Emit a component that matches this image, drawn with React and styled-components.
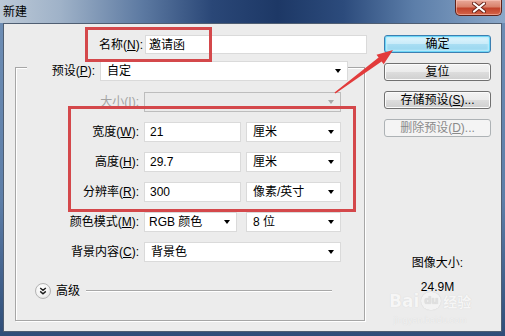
import React from "react";
import styled, { createGlobalStyle, css } from "styled-components";

const GlobalStyle = createGlobalStyle`
  html, body {
    margin: 0;
    padding: 0;
    width: 505px;
    height: 336px;
    overflow: hidden;
    background: #ececec;
  }
  * {
    box-sizing: border-box;
  }
`;

const Window = styled.div`
  position: relative;
  width: 505px;
  height: 336px;
  display: flex;
  flex-direction: column;
  background: linear-gradient(180deg, #6f8fb6 0%, #5d7ea8 60%, #2f4d78 100%);
  font-family: "Liberation Sans", "Noto Sans CJK SC", sans-serif;
  font-size: 12px;
  color: #000;
`;

const TitleBar = styled.div`
  height: 23px;
  display: flex;
  align-items: center;
  background: linear-gradient(
    90deg,
    #bcc9d7 0%,
    #9fb2c8 12%,
    #5d7aa2 28%,
    #2a4777 42%,
    #1d3866 55%,
    #2c4b7c 68%,
    #5c7ea9 82%,
    #8ba8c9 100%
  );
`;

const Title = styled.div`
  padding-left: 3px;
  font-size: 12px;
  line-height: 14px;
  color: #000;
`;

const CloseButton = styled.div`
  margin-left: auto;
  margin-right: 3px;
  align-self: flex-start;
  width: 47px;
  height: 16px;
  display: flex;
  align-items: center;
  justify-content: center;
  border: 1px solid #5e2219;
  border-top: none;
  border-radius: 0 0 5px 5px;
  background: linear-gradient(180deg, #e9a99a 0%, #d9826c 45%, #c2432b 55%, #d4654a 100%);
  box-shadow: inset 0 0 0 1px rgba(255, 210, 200, 0.5);
`;

const Client = styled.div`
  flex: 1;
  margin: 0 3px 4px 3px;
  border: 1px solid #4f5e72;
  background: #ececec;
  display: flex;
`;

const LeftCol = styled.div`
  width: 380px;
  display: flex;
  flex-direction: column;
`;

const NameRow = styled.div`
  margin-top: 11px;
  display: flex;
  align-items: center;
  height: 19px;
`;

const Label = styled.div`
  width: ${(p) => p.$width}px;
  margin-right: ${(p) => p.$gap ?? 5}px;
  text-align: right;
  white-space: nowrap;
  line-height: 16px;
  color: ${(p) => (p.$disabled ? "#a3a3a3" : "#000")};
`;

const Field = styled.div`
  width: ${(p) => p.$width}px;
  height: ${(p) => p.$height ?? 20}px;
  display: flex;
  align-items: center;
  padding: 0 6px 0 ${(p) => p.$pad ?? 5}px;
  background: #fff;
  border: 1px solid #dadada;
  line-height: 16px;
  white-space: nowrap;
  ${(p) =>
    p.$disabled &&
    css`
      background: #ebebeb;
      border-color: #bdbdbd;
    `}
`;

const Arrow = styled.span`
  margin-left: auto;
  width: 0;
  height: 0;
  border-left: 3.5px solid transparent;
  border-right: 3.5px solid transparent;
  border-top: 4px solid ${(p) => (p.$disabled ? "#a8a8a8" : "#000")};
`;

const Group = styled.div`
  margin: 13px 0 0 11px;
  width: 350px;
  height: 254px;
  border: 1px solid #a6a6a6;
  box-shadow: inset 1px 1px 0 #fff, 1px 1px 0 #fff;
  display: flex;
  flex-direction: column;
`;

const PresetRow = styled.div`
  margin: -7px 0 0 11px;
  width: 321px;
  height: 19px;
  display: flex;
  align-items: center;
  background: #ececec;
`;

const FormRow = styled.div`
  margin-top: ${(p) => p.$top ?? 10}px;
  height: 20px;
  display: flex;
  align-items: center;
`;

const Spacer = styled.div`
  width: ${(p) => p.$width}px;
`;

const AdvancedRow = styled.div`
  margin: 21px 32px 0 19px;
  height: 16px;
  display: flex;
  align-items: center;
`;

const RoundToggle = styled.div`
  width: 16px;
  height: 16px;
  border-radius: 50%;
  border: 1px solid #b3b3b3;
  background: radial-gradient(circle at 40% 35%, #ffffff 0%, #f2f2f2 55%, #d6d6d6 100%);
  display: flex;
  align-items: center;
  justify-content: center;
`;

const AdvancedText = styled.div`
  margin-left: 5px;
  line-height: 16px;
`;

const Rule = styled.div`
  flex: 1;
  margin-left: 6px;
  height: 2px;
  border-top: 1px solid #a8a8a8;
  border-bottom: 1px solid #fff;
`;

const RightCol = styled.div`
  width: 107px;
  display: flex;
  flex-direction: column;
  gap: 10px;
  padding-top: 11px;
`;

const Button = styled.div`
  height: 18px;
  display: flex;
  align-items: center;
  justify-content: center;
  border: 1px solid #707070;
  border-radius: 3px;
  line-height: 16px;
  background: linear-gradient(180deg, #f3f3f3 0%, #ebebeb 50%, #dddddd 51%, #cfcfcf 100%);
  box-shadow: inset 0 0 0 1px #fbfbfb;
  ${(p) =>
    p.$primary &&
    css`
      border-color: #3c7fb1;
      background: linear-gradient(180deg, #e3f5fc 0%, #c8ebf9 50%, #a9def3 51%, #95d4ef 100%);
      box-shadow: inset 0 0 0 1px #6ed6f7, inset 0 0 2px 2px #bdeefc;
    `}
  ${(p) =>
    p.$disabled &&
    css`
      border-color: #adb2b5;
      background: #f4f4f4;
      box-shadow: none;
      color: #8a8a8a;
    `}
`;

const ImageSize = styled.div`
  margin-top: 108px;
  text-align: center;
  line-height: 16px;
`;

const ImageValue = styled.div`
  text-align: center;
  line-height: 16px;
  margin-top: 8px;
`;

const Overlay = styled.svg`
  position: absolute;
  left: 0;
  top: 0;
  pointer-events: none;
`;

const Watermark = styled.div`
  position: absolute;
  left: 389px;
  top: 291px;
  display: flex;
  flex-direction: column;
  align-items: center;
  white-space: nowrap;
  color: #f6f6f6;
  text-shadow: 0 0 1px #cfcfcf;
  pointer-events: none;
`;

const MarkLine = styled.div`
  display: flex;
  align-items: center;
  gap: 2px;
  font-family: "DejaVu Sans", "Noto Sans CJK SC", sans-serif;
  font-weight: bold;
  font-size: 17px;
  line-height: 20px;
`;

const MarkBadge = styled.span`
  width: 20px;
  height: 18px;
  border-radius: 9px;
  background: #f3f3f3;
  box-shadow: 0 0 1px #c4c4c4;
  color: #e0e0e0;
  font-size: 10px;
  line-height: 18px;
  text-align: center;
`;

const MarkCn = styled.span`
  font-family: "Noto Sans CJK SC", sans-serif;
  font-size: 14px;
  font-weight: bold;
`;

const MarkUrl = styled.div`
  margin-top: 4px;
  font-size: 9px;
  line-height: 10px;
  color: #f1f1f1;
  text-shadow: 0 0 1px #d6d6d6;
`;

const Select = ({ width, children, disabled, pad }) => (
  <Field $width={width} $disabled={disabled} $pad={pad ?? 6}>
    {children}
    <Arrow $disabled={disabled} />
  </Field>
);

const App = () => {
  return (
    <>
      <GlobalStyle />
      <Window>
        <TitleBar>
          <Title>新建</Title>
          <CloseButton>
            <svg width="14" height="11" viewBox="0 0 14 11">
              <path
                d="M2 1.5 L12 9.5 M12 1.5 L2 9.5"
                stroke="#6b2418"
                strokeWidth="4"
                strokeLinecap="round"
              />
              <path
                d="M2 1.5 L12 9.5 M12 1.5 L2 9.5"
                stroke="#ffffff"
                strokeWidth="2.2"
                strokeLinecap="round"
              />
            </svg>
          </CloseButton>
        </TitleBar>
        <Client>
          <LeftCol>
            <NameRow>
              <Label $width={139} $gap={2}>
                名称(<u>N</u>):
              </Label>
              <Field $width={222} $height={19} $pad={3}>
                邀请函
              </Field>
            </NameRow>

            <Group>
              <PresetRow>
                <Label $width={68}>
                  预设(<u>P</u>):
                </Label>
                <Select width={248} pad={6}>
                  自定
                </Select>
              </PresetRow>

              <FormRow $top={12}>
                <Label $width={123} $disabled>
                  大小(<u>I</u>):
                </Label>
                <Select width={197} disabled>
                  {""}
                </Select>
              </FormRow>

              <FormRow>
                <Label $width={123}>
                  宽度(<u>W</u>):
                </Label>
                <Field $width={97}>21</Field>
                <Spacer $width={5} />
                <Select width={95}>厘米</Select>
              </FormRow>

              <FormRow>
                <Label $width={123}>
                  高度(<u>H</u>):
                </Label>
                <Field $width={97}>29.7</Field>
                <Spacer $width={5} />
                <Select width={95}>厘米</Select>
              </FormRow>

              <FormRow>
                <Label $width={123}>
                  分辨率(<u>R</u>):
                </Label>
                <Field $width={97}>300</Field>
                <Spacer $width={5} />
                <Select width={95}>像素/英寸</Select>
              </FormRow>

              <FormRow>
                <Label $width={123}>
                  颜色模式(<u>M</u>):
                </Label>
                <Select width={93} pad={4}>
                  RGB 颜色
                </Select>
                <Spacer $width={9} />
                <Select width={95}>8 位</Select>
              </FormRow>

              <FormRow>
                <Label $width={123}>
                  背景内容(<u>C</u>):
                </Label>
                <Select width={197} pad={6}>
                  背景色
                </Select>
              </FormRow>

              <AdvancedRow>
                <RoundToggle>
                  <svg width="8" height="8" viewBox="0 0 8 8">
                    <path
                      d="M1.2 1 L4 3.4 L6.8 1 M1.2 4.4 L4 6.8 L6.8 4.4"
                      fill="none"
                      stroke="#1a1a1a"
                      strokeWidth="1.4"
                    />
                  </svg>
                </RoundToggle>
                <AdvancedText>高级</AdvancedText>
                <Rule />
              </AdvancedRow>
            </Group>
          </LeftCol>

          <RightCol>
            <Button $primary>确定</Button>
            <Button>复位</Button>
            <Button>
              存储预设(<u>S</u>)...
            </Button>
            <Button $disabled>
              删除预设(<u>D</u>)...
            </Button>
            <div>
              <ImageSize>图像大小:</ImageSize>
              <ImageValue>24.9M</ImageValue>
            </div>
          </RightCol>
        </Client>

        <Watermark>
          <MarkLine>
            Bai<MarkBadge>du</MarkBadge>
            <MarkCn>经验</MarkCn>
          </MarkLine>
          <MarkUrl>jingyan.baidu.com</MarkUrl>
        </Watermark>

        {/* red annotation marks drawn over the dialog */}
        <Overlay width="505" height="336" viewBox="0 0 505 336">
          <rect x="86.5" y="28.5" width="124" height="32" fill="none" stroke="#d4484b" strokeWidth="3" />
          <rect x="69.5" y="107.5" width="285" height="103" fill="none" stroke="#d4484b" strokeWidth="3" />
          <polygon
            points="334.5,92.4 378.6,57.5 376.5,54.7 393,50 383.7,64.3 381.6,61.5 335.5,93.6"
            fill="#e23b3b"
          />
        </Overlay>
      </Window>
    </>
  );
};

export default App;
